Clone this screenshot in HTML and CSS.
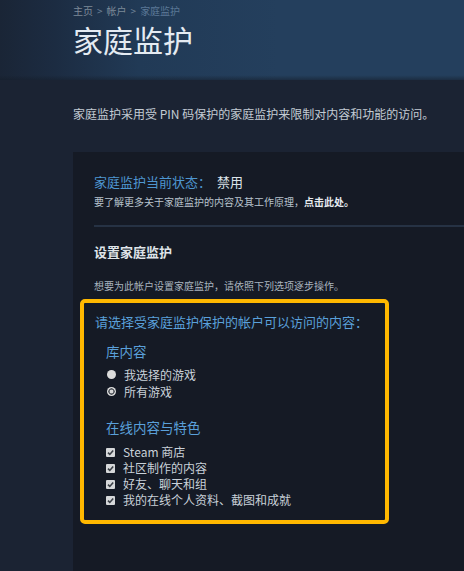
FILE: index.html
```html
<!DOCTYPE html>
<html lang="zh-CN">
<head>
<meta charset="utf-8">
<title>家庭监护</title>
<link rel="stylesheet" href="styles.css">
</head>
<body>
<header class="hero">
  <div class="crumbs"><span class="crumb">主页</span><span class="sep">&gt;</span><span class="crumb">帐户</span><span class="sep">&gt;</span><span class="crumb-current">家庭监护</span></div>
  <h1 class="title">家庭监护</h1>
</header>
<p class="intro">家庭监护采用受 PIN 码保护的家庭监护来限制对内容和功能的访问。</p>
<section class="panel">
  <div class="status"><span class="status-label">家庭监护当前状态：</span><span class="status-value">禁用</span></div>
  <div class="note">要了解更多关于家庭监护的内容及其工作原理，<b>点击此处。</b></div>
  <div class="rule"></div>
  <h2 class="setup-title">设置家庭监护</h2>
  <div class="note setup-note">想要为此帐户设置家庭监护，请依照下列选项逐步操作。</div>
  <div class="highlight">
    <div class="choose">请选择受家庭监护保护的帐户可以访问的内容：</div>
    <div class="group">
      <div class="group-title">库内容</div>
      <div class="options radios">
        <div class="opt"><span class="radio"></span>我选择的游戏</div>
        <div class="opt"><span class="radio on"></span>所有游戏</div>
      </div>
      <div class="group-title online">在线内容与特色</div>
      <div class="options checks">
        <div class="opt"><span class="check"><svg viewBox="0 0 9 9" width="9" height="9"><path d="M2 4.6 L3.8 6.4 L7.2 2.4" fill="none" stroke="#3a3f46" stroke-width="1.6"/></svg></span>Steam 商店</div>
        <div class="opt"><span class="check"><svg viewBox="0 0 9 9" width="9" height="9"><path d="M2 4.6 L3.8 6.4 L7.2 2.4" fill="none" stroke="#3a3f46" stroke-width="1.6"/></svg></span>社区制作的内容</div>
        <div class="opt"><span class="check"><svg viewBox="0 0 9 9" width="9" height="9"><path d="M2 4.6 L3.8 6.4 L7.2 2.4" fill="none" stroke="#3a3f46" stroke-width="1.6"/></svg></span>好友、聊天和组</div>
        <div class="opt"><span class="check"><svg viewBox="0 0 9 9" width="9" height="9"><path d="M2 4.6 L3.8 6.4 L7.2 2.4" fill="none" stroke="#3a3f46" stroke-width="1.6"/></svg></span>我的在线个人资料、截图和成就</div>
      </div>
    </div>
  </div>
</section>
</body>
</html>
```

FILE: styles.css
```css
html, body {
  margin: 0;
  padding: 0;
}
body {
  background: #1b2333;
  font-family: "Noto Sans CJK SC", "Noto Sans", sans-serif;
  color: #c6d0da;
  height: 571px;
  overflow: hidden;
}
.hero {
  height: 80px;
  box-sizing: border-box;
  padding-left: 73px;
  padding-top: 5px;
  background: linear-gradient(180deg, rgba(0,0,0,0) 94%, rgba(20,28,40,0.5) 100%),
              linear-gradient(90deg, #1a2536 0%, #1c2c42 12%, #213a56 30%, #243f5d 60%, #243f5d 100%);
}
.crumbs {
  font-size: 10px;
  line-height: 12px;
  color: #6f8297;
}
.sep { margin: 0 4px; }
.crumb { color: #7d8a98; }
.crumb-current { color: #5b7896; }
.title {
  margin: 4px 0 0;
  font-size: 30px;
  line-height: 36px;
  font-weight: 400;
  color: #e4ebf2;
}
.intro {
  margin: 26px 0 0;
  padding-left: 73px;
  font-size: 12px;
  line-height: 16px;
  color: #c3cbd3;
  white-space: nowrap;
}
.panel {
  margin: 30px 0 0 73px;
  padding: 21px 0 0 21px;
  background: #151a25;
  box-sizing: border-box;
  height: 419px;
}
.status {
  font-size: 13px;
  line-height: 18px;
}
.status-label { color: #4e96d0; }
.status-value { color: #dde4ea; margin-left: 6px; }
.note {
  margin-top: 4px;
  font-size: 10px;
  line-height: 14px;
  color: #b8c3cd;
  white-space: nowrap;
}
.note b { color: #e6ebf0; font-weight: 700; }
.rule {
  margin-top: 16px;
  height: 2px;
  background: #263244;
}
.setup-title {
  margin: 17px 0 0;
  font-size: 13px;
  line-height: 16px;
  font-weight: 700;
  color: #dfe4e9;
}
.setup-note {
  margin-top: 19px;
  color: #a9b4bf;
}
.highlight {
  margin: 6px 0 0 -14px;
  width: 309px;
  box-sizing: border-box;
  border: 4px solid #ffb800;
  border-radius: 5px;
  padding: 10px 0 12px 11px;
}
.choose {
  font-size: 13px;
  line-height: 18px;
  color: #5aa0da;
  white-space: nowrap;
}
.group {
  padding-left: 11px;
  margin-top: 12px;
}
.group-title {
  font-size: 13.5px;
  line-height: 16px;
  color: #5aa0da;
}
.group-title.online {
  margin-top: 18px;
  line-height: 18px;
}
.options {
  display: flex;
  flex-direction: column;
}
.radios { margin-top: 7px; }
.radios .opt { line-height: 17px; }
.checks { margin-top: 8px; }
.checks .opt { line-height: 16px; }
.opt {
  display: flex;
  align-items: center;
  font-size: 12px;
  color: #c9d1d9;
  white-space: nowrap;
}
.radio {
  width: 9px;
  height: 9px;
  border-radius: 50%;
  background: #dcdcdc;
  margin: 0 8px 0 1px;
  flex: none;
}
.radio.on {
  background: radial-gradient(circle, #d8d8d8 0 1.6px, #5a5e64 2.1px 3px, #dcdcdc 3.4px);
}
.check {
  width: 9px;
  height: 9px;
  background: #d6d8da;
  border-radius: 1px;
  margin-right: 8px;
  flex: none;
  display: flex;
}
.check svg { display: block; }
```
